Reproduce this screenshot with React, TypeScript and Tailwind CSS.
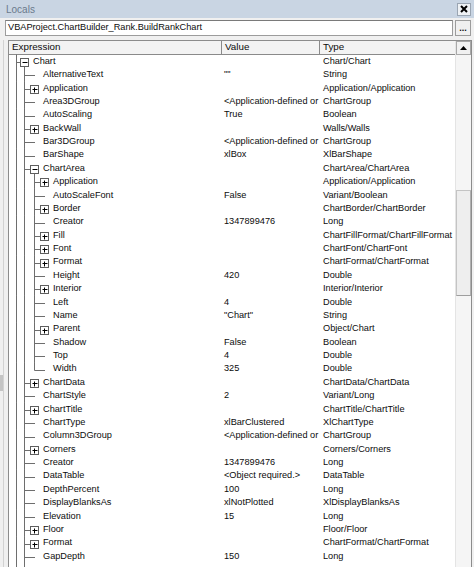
import React from "react";

type Row = {
  name: string;
  level: 1 | 2 | 3;
  kind: "leaf" | "plus" | "minus";
  value: string;
  type: string;
  last?: boolean;
};

const AD = "<Application-defined or";

const rows: Row[] = [
  { name: "Chart", level: 1, kind: "minus", value: "", type: "Chart/Chart" },
  { name: "AlternativeText", level: 2, kind: "leaf", value: '""', type: "String" },
  { name: "Application", level: 2, kind: "plus", value: "", type: "Application/Application" },
  { name: "Area3DGroup", level: 2, kind: "leaf", value: AD, type: "ChartGroup" },
  { name: "AutoScaling", level: 2, kind: "leaf", value: "True", type: "Boolean" },
  { name: "BackWall", level: 2, kind: "plus", value: "", type: "Walls/Walls" },
  { name: "Bar3DGroup", level: 2, kind: "leaf", value: AD, type: "ChartGroup" },
  { name: "BarShape", level: 2, kind: "leaf", value: "xlBox", type: "XlBarShape" },
  { name: "ChartArea", level: 2, kind: "minus", value: "", type: "ChartArea/ChartArea" },
  { name: "Application", level: 3, kind: "plus", value: "", type: "Application/Application" },
  { name: "AutoScaleFont", level: 3, kind: "leaf", value: "False", type: "Variant/Boolean" },
  { name: "Border", level: 3, kind: "plus", value: "", type: "ChartBorder/ChartBorder" },
  { name: "Creator", level: 3, kind: "leaf", value: "1347899476", type: "Long" },
  { name: "Fill", level: 3, kind: "plus", value: "", type: "ChartFillFormat/ChartFillFormat" },
  { name: "Font", level: 3, kind: "plus", value: "", type: "ChartFont/ChartFont" },
  { name: "Format", level: 3, kind: "plus", value: "", type: "ChartFormat/ChartFormat" },
  { name: "Height", level: 3, kind: "leaf", value: "420", type: "Double" },
  { name: "Interior", level: 3, kind: "plus", value: "", type: "Interior/Interior" },
  { name: "Left", level: 3, kind: "leaf", value: "4", type: "Double" },
  { name: "Name", level: 3, kind: "leaf", value: '"Chart"', type: "String" },
  { name: "Parent", level: 3, kind: "plus", value: "", type: "Object/Chart" },
  { name: "Shadow", level: 3, kind: "leaf", value: "False", type: "Boolean" },
  { name: "Top", level: 3, kind: "leaf", value: "4", type: "Double" },
  { name: "Width", level: 3, kind: "leaf", value: "325", type: "Double", last: true },
  { name: "ChartData", level: 2, kind: "plus", value: "", type: "ChartData/ChartData" },
  { name: "ChartStyle", level: 2, kind: "leaf", value: "2", type: "Variant/Long" },
  { name: "ChartTitle", level: 2, kind: "plus", value: "", type: "ChartTitle/ChartTitle" },
  { name: "ChartType", level: 2, kind: "leaf", value: "xlBarClustered", type: "XlChartType" },
  { name: "Column3DGroup", level: 2, kind: "leaf", value: AD, type: "ChartGroup" },
  { name: "Corners", level: 2, kind: "plus", value: "", type: "Corners/Corners" },
  { name: "Creator", level: 2, kind: "leaf", value: "1347899476", type: "Long" },
  { name: "DataTable", level: 2, kind: "leaf", value: "<Object required.>", type: "DataTable" },
  { name: "DepthPercent", level: 2, kind: "leaf", value: "100", type: "Long" },
  { name: "DisplayBlanksAs", level: 2, kind: "leaf", value: "xlNotPlotted", type: "XlDisplayBlanksAs" },
  { name: "Elevation", level: 2, kind: "leaf", value: "15", type: "Long" },
  { name: "Floor", level: 2, kind: "plus", value: "", type: "Floor/Floor" },
  { name: "Format", level: 2, kind: "plus", value: "", type: "ChartFormat/ChartFormat" },
  { name: "GapDepth", level: 2, kind: "leaf", value: "150", type: "Long" },
  { name: "", level: 2, kind: "leaf", value: "", type: "" },
];

const H = 13.38;
const LINE = "#6e6e6e";
const lineX = [7.5, 15.5, 25.5];
const boxLeft = [11.5, 21.5, 31.5];
const textX = [24, 34, 44];

function Tree({ r }: { r: Row }) {
  const cy = H / 2;
  const L = r.level - 1;
  const w = textX[L];
  const els: React.ReactNode[] = [];
  els.push(<line key="root" x1={7.5} y1={-0.5} x2={7.5} y2={H + 0.5} stroke={LINE} strokeWidth={1} />);
  if (r.level >= 2) {
    els.push(<line key="l2" x1={15.5} y1={-0.5} x2={15.5} y2={H + 0.5} stroke={LINE} strokeWidth={1} />);
  }
  if (r.level === 3) {
    els.push(
      <line key="l3" x1={25.5} y1={-0.5} x2={25.5} y2={r.last ? Math.round(cy) + 0.5 : H + 0.5} stroke={LINE} strokeWidth={1} />
    );
  }
  const px = lineX[L];
  if (r.kind === "leaf") {
    if (r.name) {
      els.push(<line key="h" x1={px} y1={Math.round(cy) + 0.5} x2={px + 10.5} y2={Math.round(cy) + 0.5} stroke={LINE} strokeWidth={1} />);
    }
  } else {
    const bx = boxLeft[L];
    const by = Math.round(cy) - 4 + 0.5;
    els.push(<line key="h" x1={px} y1={by + 4} x2={bx} y2={by + 4} stroke={LINE} strokeWidth={1} />);
    if (r.kind === "minus") {
      els.push(<line key="down" x1={bx + 4} y1={by + 8} x2={bx + 4} y2={H + 0.5} stroke={LINE} strokeWidth={1} />);
    }
    els.push(<rect key="box" x={bx} y={by} width={8} height={8} fill="#fff" stroke="#5e5e5e" strokeWidth={1} />);
    els.push(<line key="m" x1={bx + 2} y1={by + 4} x2={bx + 7} y2={by + 4} stroke="#000" strokeWidth={1} />);
    if (r.kind === "plus") {
      els.push(<line key="p" x1={bx + 4} y1={by + 2} x2={bx + 4} y2={by + 7} stroke="#000" strokeWidth={1} />);
    }
  }
  return (
    <svg width={w} height={H} className="shrink-0 overflow-visible">
      {els}
    </svg>
  );
}

export default function App() {
  return (
    <div
      className="w-[474px] h-[567px] overflow-hidden bg-[#f0f0f0] flex flex-col text-[9.2px] text-[#0c0c0c]"
      style={{ fontFamily: '"Liberation Sans", Arial, sans-serif' }}
    >
      {/* title bar */}
      <div className="h-[18px] shrink-0 bg-[#c9d5e3] flex items-center justify-between pl-[6px] pr-[3px]">
        <span className="text-[10px] text-[#6b7a8c]">Locals</span>
        <div className="w-[14px] h-[13px] bg-[#eef1f4] border border-[#9aa5b2] flex items-center justify-center">
          <svg width="8" height="8" viewBox="0 0 8 8">
            <path d="M1 1 L7 7 M7 1 L1 7" stroke="#000" strokeWidth="2" />
          </svg>
        </div>
      </div>
      {/* context box */}
      <div className="h-[16px] mt-[2px] shrink-0 flex gap-[2px] pl-[5px] pr-[3px]">
        <div className="flex-1 bg-white border border-[#9c9c9c] border-t-[#7a7a7a] flex items-center pl-[2px] whitespace-nowrap overflow-hidden">
          VBAProject.ChartBuilder_Rank.BuildRankChart
        </div>
        <div className="w-[16px] bg-[#f0f0f0] border border-[#9c9c9c] flex items-end justify-center pb-[2px] font-bold leading-none text-[9px]">
          ...
        </div>
      </div>
      {/* list */}
      <div className="flex-1 mt-[4px] flex min-h-0">
        <div className="w-[3px] shrink-0 flex flex-col">
          <div className="h-[335px]" />
          <div className="h-[16px] bg-[#c4c4c4]" />
        </div>
        <div className="w-[1px] shrink-0 bg-[#d2d2d2]" />
        <div className="w-[4px] shrink-0" />
        <div className="w-[464px] shrink-0 border border-[#8c8c8c] border-b-0 flex min-h-0">
          <div className="w-[446px] shrink-0 flex flex-col bg-white min-h-0">
            <div className="h-[14px] shrink-0 flex bg-[#f3f3f3] border-b border-[#8a8a8a] text-[9.8px]">
              <div className="w-[213px] shrink-0 border-r border-[#8a8a8a] pl-[3px] flex items-center">Expression</div>
              <div className="w-[98px] shrink-0 border-r border-[#8a8a8a] pl-[3px] flex items-center">Value</div>
              <div className="flex-1 pl-[3px] flex items-center">Type</div>
            </div>
            <div className="flex flex-col">
              {rows.map((r, i) => (
                <div key={i} className="h-[13.38px] shrink-0 flex items-center whitespace-nowrap">
                  <div className="w-[213px] shrink-0 flex items-center h-full">
                    <Tree r={r} />
                    <span>{r.name}</span>
                  </div>
                  <div className="w-[98px] shrink-0 pl-[2px] overflow-hidden">{r.value}</div>
                  <div className="flex-1 pl-[3px] overflow-hidden">{r.type}</div>
                </div>
              ))}
            </div>
          </div>
          {/* scrollbar */}
          <div className="w-[16px] shrink-0 flex flex-col bg-[#f5f5f5] border-l border-[#e4e4e4]">
            <div className="h-[14px] shrink-0 bg-[#f0f0f0] border border-[#a8a8a8] flex items-center justify-center">
              <svg width="7" height="4" viewBox="0 0 7 4">
                <path d="M3.5 0 L7 4 L0 4 Z" fill="#000" />
              </svg>
            </div>
            <div className="h-[135px] shrink-0" />
            <div className="h-[106px] shrink-0 bg-[#eeeeee] border border-[#c4c4c4] border-b-[#9e9e9e] border-r-[#b0b0b0]" />
            <div className="flex-1" />
          </div>
        </div>
      </div>
    </div>
  );
}
